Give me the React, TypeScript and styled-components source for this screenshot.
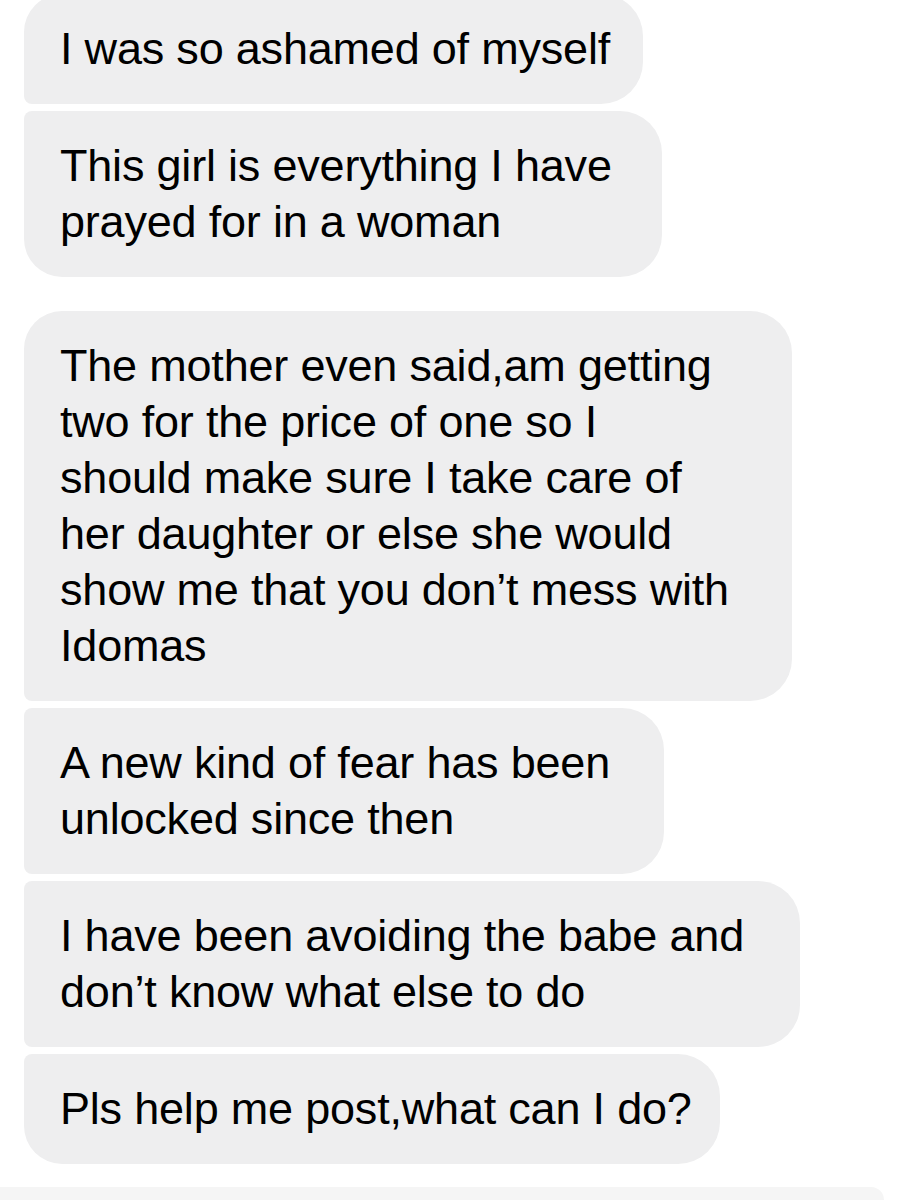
import styled, { createGlobalStyle, css } from "styled-components";

const GlobalStyle = createGlobalStyle`
    html, body {
        margin: 0;
        padding: 0;
        background: #ffffff;
        overflow: hidden;
    }
`;

interface Mensaje {
    lineas: string[];
    ancho: number;
    inicioGrupo?: boolean;
    finGrupo?: boolean;
}

const mensajes: Mensaje[] = [
    { lineas: ["I was so ashamed of myself"], ancho: 619, inicioGrupo: true },
    { lineas: ["This girl is everything I have", "prayed for in a woman"], ancho: 638, finGrupo: true },
    {
        lineas: [
            "The mother even said,am getting",
            "two for the price of one so I",
            "should make sure I take care of",
            "her daughter or else she would",
            "show me that you don\u2019t mess with",
            "Idomas",
        ],
        ancho: 768,
        inicioGrupo: true,
    },
    { lineas: ["A new kind of fear has been", "unlocked since then"], ancho: 640 },
    { lineas: ["I have been avoiding the babe and", "don\u2019t know what else to do"], ancho: 776 },
    { lineas: ["Pls help me post,what can I do?"], ancho: 696, finGrupo: true },
];

const Pantalla = styled.div`
    display: flex;
    flex-direction: column;
    width: 912px;
    height: 1200px;
    overflow: hidden;
    background: #ffffff;
`;

const ListaMensajes = styled.div`
    display: flex;
    flex-direction: column;
    align-items: flex-start;
    gap: 7px;
    margin-top: -6px;
    padding-left: 24px;
`;

const Burbuja = styled.div<{ $inicio?: boolean; $fin?: boolean; $primero?: boolean }>`
    box-sizing: border-box;
    background: #eeeeef;
    color: #000000;
    font-family: "Liberation Sans", Arial, sans-serif;
    font-size: 45px;
    line-height: 56px;
    letter-spacing: -0.2px;
    padding: 27px 20px 27px 36px;
    border-radius: 8px 42px 42px 8px;
    white-space: nowrap;

    ${(p) => p.$inicio && css`
        border-top-left-radius: 38px;
    `}
    ${(p) => p.$fin && css`
        border-bottom-left-radius: 38px;
    `}
    ${(p) => p.$inicio && !p.$primero && css`
        margin-top: 27px;
    `}
`;

const Linea = styled.div`
    display: block;
`;

const BarraInferior = styled.div`
    margin-top: 23px;
    width: 884px;
    flex: 1;
    background: #f5f5f5;
    border-top-right-radius: 22px;
`;

export default function App() {
    return (
        <>
            <GlobalStyle />
            <Pantalla>
                <ListaMensajes>
                    {mensajes.map((m, i) => (
                        <Burbuja
                            key={i}
                            $inicio={m.inicioGrupo}
                            $fin={m.finGrupo}
                            $primero={i === 0}
                            style={{ width: m.ancho }}
                        >
                            {m.lineas.map((l, j) => (
                                <Linea key={j}>{l}</Linea>
                            ))}
                        </Burbuja>
                    ))}
                </ListaMensajes>
                <BarraInferior />
            </Pantalla>
        </>
    );
}
